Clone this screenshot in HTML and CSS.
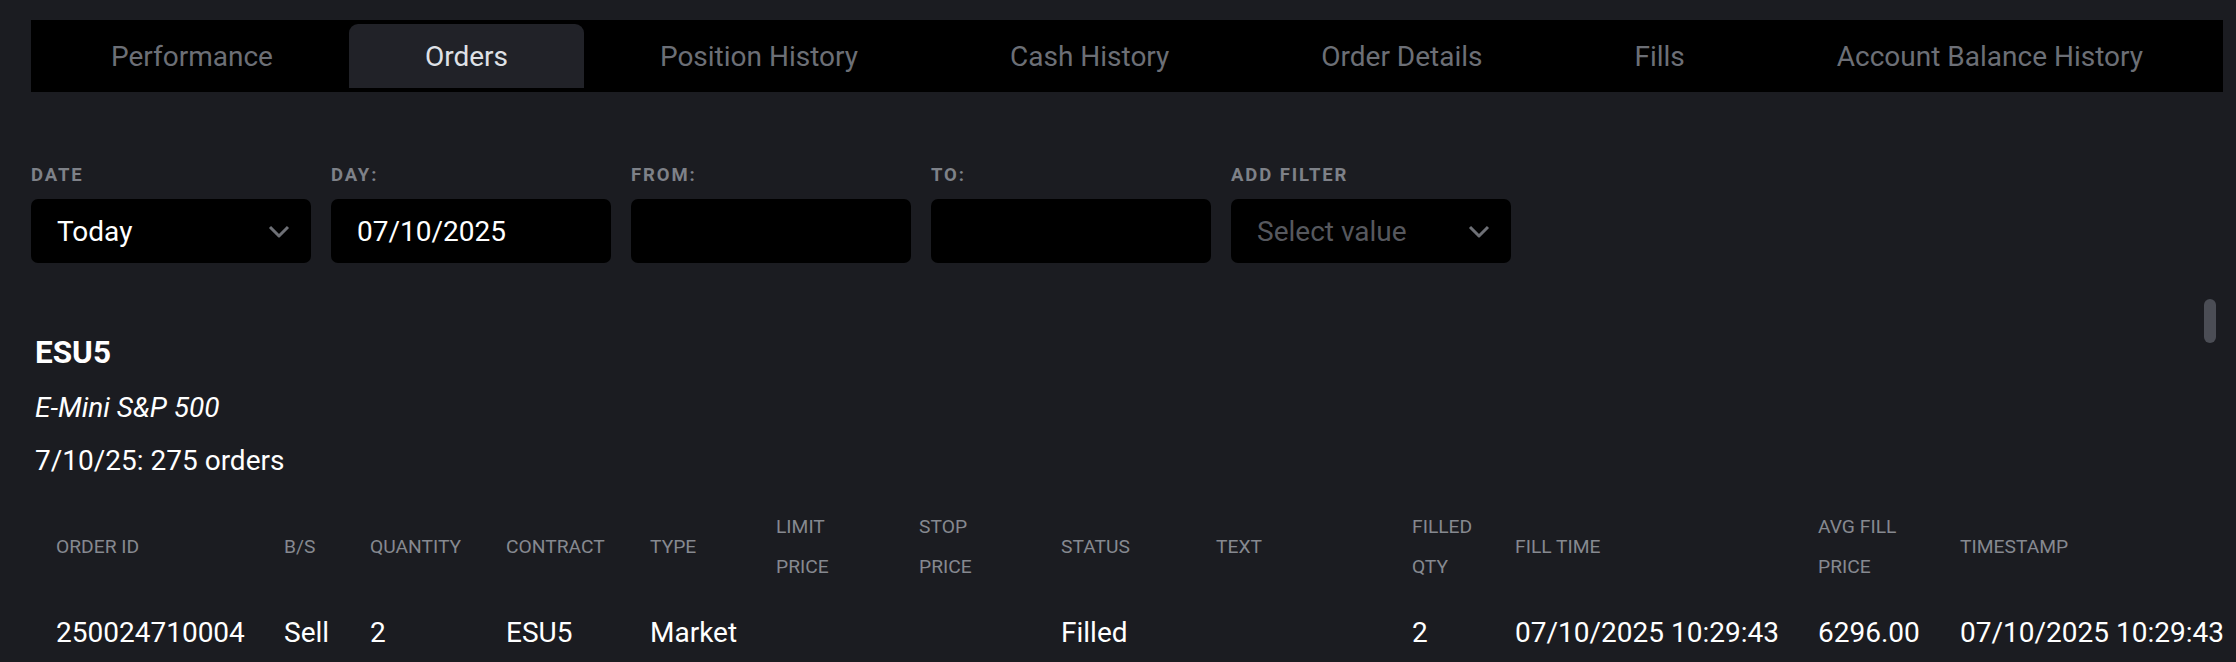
FILE: index.html
```html
<!DOCTYPE html>
<html lang="en">
<head>
<meta charset="utf-8">
<title>Orders</title>
<link rel="stylesheet" href="styles.css">
</head>
<body>
<nav class="tabs">
  <div class="tab">Performance</div>
  <div class="tab active">Orders</div>
  <div class="tab">Position History</div>
  <div class="tab">Cash History</div>
  <div class="tab">Order Details</div>
  <div class="tab">Fills</div>
  <div class="tab">Account Balance History</div>
</nav>

<section class="filters">
  <div class="field">
    <div class="label">Date</div>
    <div class="box">
      <span>Today</span>
      <svg class="chev" width="22" height="13" viewBox="0 0 22 13"><polyline points="2,2 11,11 20,2" fill="none" stroke="#6e7076" stroke-width="3" stroke-linejoin="round"/></svg>
    </div>
  </div>
  <div class="field">
    <div class="label">Day:</div>
    <div class="box"><span>07/10/2025</span></div>
  </div>
  <div class="field">
    <div class="label">From:</div>
    <div class="box"></div>
  </div>
  <div class="field">
    <div class="label">To:</div>
    <div class="box"></div>
  </div>
  <div class="field">
    <div class="label">Add Filter</div>
    <div class="box">
      <span class="placeholder">Select value</span>
      <svg class="chev" width="22" height="13" viewBox="0 0 22 13"><polyline points="2,2 11,11 20,2" fill="none" stroke="#6e7076" stroke-width="3" stroke-linejoin="round"/></svg>
    </div>
  </div>
</section>

<main class="content">
  <div class="thumb"></div>
  <h2 class="symbol">ESU5</h2>
  <p class="desc">E-Mini S&amp;P 500</p>
  <p class="count">7/10/25: 275 orders</p>
  <div class="table">
    <div class="th">ORDER ID</div>
    <div class="th">B/S</div>
    <div class="th">QUANTITY</div>
    <div class="th">CONTRACT</div>
    <div class="th">TYPE</div>
    <div class="th">LIMIT<br>PRICE</div>
    <div class="th">STOP<br>PRICE</div>
    <div class="th">STATUS</div>
    <div class="th">TEXT</div>
    <div class="th">FILLED<br>QTY</div>
    <div class="th">FILL TIME</div>
    <div class="th">AVG FILL<br>PRICE</div>
    <div class="th">TIMESTAMP</div>

    <div class="td">250024710004</div>
    <div class="td">Sell</div>
    <div class="td">2</div>
    <div class="td">ESU5</div>
    <div class="td">Market</div>
    <div class="td"></div>
    <div class="td"></div>
    <div class="td">Filled</div>
    <div class="td"></div>
    <div class="td">2</div>
    <div class="td">07/10/2025 10:29:43</div>
    <div class="td">6296.00</div>
    <div class="td">07/10/2025 10:29:43</div>
  </div>
</main>
</body>
</html>
```

FILE: styles.css
```css
* { box-sizing: border-box; }

html, body {
  height: 662px;
  overflow: hidden;
}

body {
  margin: 0;
  padding: 20px 13px 0 31px;
  background: #1b1c21;
  color: #ffffff;
  font-family: Roboto, "Liberation Sans", sans-serif;
}

/* Tabs */
.tabs {
  display: flex;
  height: 72px;
  padding: 4px;
  background: #000000;
}

.tab {
  flex: 1 1 auto;
  height: 64px;
  display: flex;
  align-items: center;
  justify-content: center;
  font-size: 28px;
  color: #6c6f76;
  white-space: nowrap;
}

.tab.active {
  background: #212228;
  color: #dfe1e6;
  border-radius: 9px 9px 0 0;
}

/* Filters */
.filters {
  display: flex;
  gap: 20px;
  margin-top: 72px;
}

.field {
  width: 280px;
}

.label {
  font-size: 18.5px;
  line-height: 22px;
  font-weight: 700;
  letter-spacing: 1.9px;
  text-transform: uppercase;
  color: #7e8188;
  margin-bottom: 13px;
}

.box {
  height: 64px;
  background: #000000;
  border-radius: 7px;
  padding: 0 21px 0 26px;
  display: flex;
  align-items: center;
  justify-content: space-between;
  font-size: 28px;
  color: #ffffff;
}

.placeholder {
  color: #56585e;
}

.chev {
  display: block;
  flex: none;
}

/* Content */
.content {
  position: relative;
  overflow: hidden;
  height: 399px;
  padding: 71px 0 0 4px;
}

.thumb {
  position: absolute;
  top: 36px;
  right: 7px;
  width: 12px;
  height: 44px;
  border-radius: 6px;
  background: #4b4d55;
}

.symbol {
  margin: 0;
  font-size: 31.5px;
  line-height: 38px;
  font-weight: 700;
}

.desc {
  margin: 16px 0 0;
  font-size: 28px;
  line-height: 40px;
  font-style: italic;
}

.count {
  margin: 13px 0 0;
  font-size: 28px;
  line-height: 40px;
  font-weight: 400;
}

.table {
  margin: 13px 0 0 21px;
  display: grid;
  grid-template-columns: 228px 86px 136px 144px 126px 143px 142px 155px 196px 103px 303px 142px 300px;
  align-items: center;
}

.th {
  padding: 13px 0;
  font-size: 19.25px;
  line-height: 40px;
  color: #868990;
  white-space: nowrap;
}

.td {
  padding: 13px 0;
  font-size: 28px;
  line-height: 40px;
  color: #ffffff;
  white-space: nowrap;
}
```
